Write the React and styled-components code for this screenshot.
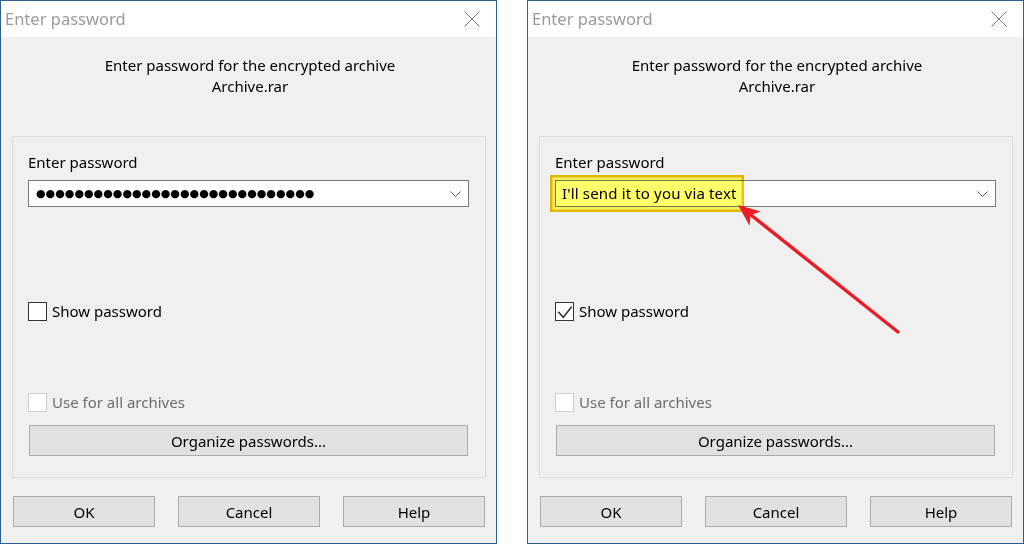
import React from "react";
import styled, { createGlobalStyle } from "styled-components";

const GlobalStyle = createGlobalStyle`
  html, body {
    margin: 0;
    padding: 0;
    background: #ffffff;
  }
  body {
    font-family: "Noto Sans", "Open Sans", sans-serif;
    color: #000;
  }
`;

const Screen = styled.div`
  display: flex;
  gap: 30px;
  width: 1024px;
  height: 544px;
  overflow: hidden;
`;

const Window = styled.div`
  position: relative;
  width: 497px;
  height: 544px;
  box-sizing: border-box;
  border: 1px solid #2b5f91;
  display: flex;
  flex-direction: column;
  background: #f0f0f0;
  flex: none;
`;

const TitleBar = styled.div`
  height: 36px;
  flex: none;
  background: #ffffff;
  display: flex;
  align-items: center;
  justify-content: space-between;
  padding: 0 16px 0 4px;
`;

const TitleText = styled.span`
  font-size: 16.5px;
  color: #9a9a9a;
  line-height: 1;
  margin-top: 1px;
`;

const Body = styled.div`
  flex: 1;
  display: flex;
  flex-direction: column;
  padding: 18px 10px 0 11px;
`;

const Prompt = styled.div`
  text-align: center;
  font-size: 15px;
  line-height: 21px;
  height: 42px;
  padding-left: 2px;
`;

const Group = styled.div`
  margin-top: 39px;
  height: 342px;
  box-sizing: border-box;
  border: 1px solid #dcdcdc;
  padding: 15px 16px 0 15px;
  display: flex;
  flex-direction: column;
`;

const FieldLabel = styled.div`
  font-size: 15px;
  line-height: 21px;
`;

const Combo = styled.div`
  margin-top: 7px;
  height: 27px;
  box-sizing: border-box;
  border: 1px solid #7a7a7a;
  background: #ffffff;
  display: flex;
  align-items: center;
  justify-content: space-between;
  padding: 0 7px 0 ${(p) => (p.$masked ? 7 : 6)}px;
`;

const ComboValue = styled.span`
  font-size: 15px;
  line-height: 1;
  white-space: nowrap;
  letter-spacing: 0.15px;
`;

const Mask = styled.span`
  font-family: "DejaVu Sans", sans-serif;
  font-size: 11px;
  line-height: 1;
  letter-spacing: 0;
  white-space: nowrap;
`;

const CheckRow = styled.label`
  margin-top: ${(p) => p.$gap}px;
  display: flex;
  align-items: center;
  gap: 5px;
  height: 19px;
  line-height: 19px;
  font-size: 15px;
  color: ${(p) => (p.$disabled ? "#6d6d6d" : "#000")};
`;

const Box = styled.span`
  width: 19px;
  height: 19px;
  box-sizing: border-box;
  border: 1px solid ${(p) => (p.$disabled ? "#cccccc" : "#333333")};
  background: #ffffff;
  display: flex;
  align-items: center;
  justify-content: center;
  flex: none;
`;

const WideButton = styled.div`
  margin: 13px 1px 0;
  height: 31px;
  box-sizing: border-box;
  border: 1px solid #adadad;
  background: #e1e1e1;
  display: flex;
  align-items: center;
  justify-content: center;
  font-size: 15px;
`;

const ButtonRow = styled.div`
  margin-top: 18px;
  display: flex;
  justify-content: space-between;
  padding: 0 1px;
`;

const DialogButton = styled.div`
  width: 142px;
  height: 31px;
  box-sizing: border-box;
  border: 1px solid #adadad;
  background: #e1e1e1;
  display: flex;
  align-items: center;
  justify-content: center;
  font-size: 15px;
`;

/* Marker-pen highlight laid over the revealed password */
const Highlight = styled.div`
  position: absolute;
  left: 22px;
  top: 174px;
  width: 194px;
  height: 37px;
  box-sizing: border-box;
  border: 2px solid #f2c200;
  box-shadow: inset 0 0 0 1px #fbe23c;
  background: #ffff6a;
  mix-blend-mode: multiply;
  pointer-events: none;
`;

const Overlay = styled.svg`
  position: absolute;
  left: 0;
  top: 0;
  width: 100%;
  height: 100%;
  pointer-events: none;
`;

const CloseIcon = () => (
  <svg width="16" height="16" viewBox="0 0 16 16">
    <path d="M0.5 0.5 L15.5 15.5 M15.5 0.5 L0.5 15.5" stroke="#7a7a7a" strokeWidth="1" fill="none" />
  </svg>
);

const Chevron = () => (
  <svg width="11" height="6" viewBox="0 0 11 6">
    <polyline points="0.5,0.5 5.5,5.5 10.5,0.5" stroke="#555" strokeWidth="1" fill="none" />
  </svg>
);

const Tick = () => (
  <svg width="17" height="17" viewBox="0 0 17 17">
    <polyline points="2.3,8.7 7.3,14.3 15.7,3.7" stroke="#333" strokeWidth="1.6" fill="none" />
  </svg>
);

const Check = ({ checked, disabled, label, gap }) => (
  <CheckRow $gap={gap} $disabled={disabled}>
    <Box $disabled={disabled}>{checked && <Tick />}</Box>
    {label}
  </CheckRow>
);

const PasswordDialog = ({ revealed }) => (
  <Window>
    <TitleBar>
      <TitleText>Enter password</TitleText>
      <CloseIcon />
    </TitleBar>
    <Body>
      <Prompt>
        Enter password for the encrypted archive
        <br />
        Archive.rar
      </Prompt>
      <Group>
        <FieldLabel>Enter password</FieldLabel>
        <Combo $masked={!revealed}>
          {revealed ? (
            <ComboValue>I'll send it to you via text</ComboValue>
          ) : (
            <Mask>{"●".repeat(29)}</Mask>
          )}
          <Chevron />
        </Combo>
        <Check gap={95} checked={revealed} label="Show password" />
        <Check gap={72} disabled label="Use for all archives" />
        <WideButton>Organize passwords...</WideButton>
      </Group>
      <ButtonRow>
        <DialogButton>OK</DialogButton>
        <DialogButton>Cancel</DialogButton>
        <DialogButton>Help</DialogButton>
      </ButtonRow>
    </Body>
    {revealed && (
      <>
        <Highlight />
        <Overlay viewBox="0 0 495 542">
          <line x1="370" y1="331" x2="223" y2="214" stroke="#ec1c24" strokeWidth="3.4" strokeLinecap="round" />
          <polygon points="210,204 232.8,210.6 222.5,214 221.6,224.8" fill="#ec1c24" />
        </Overlay>
      </>
    )}
  </Window>
);

export default function App() {
  return (
    <>
      <GlobalStyle />
      <Screen>
        <PasswordDialog />
        <PasswordDialog revealed />
      </Screen>
    </>
  );
}
